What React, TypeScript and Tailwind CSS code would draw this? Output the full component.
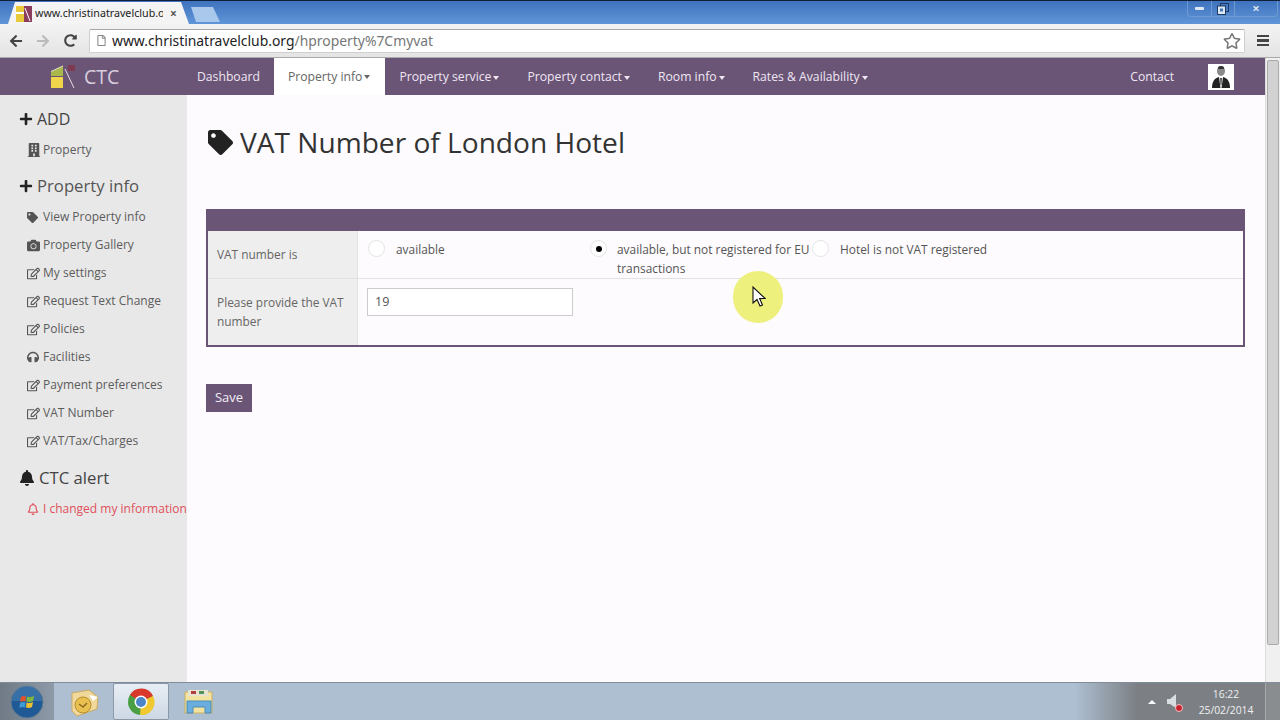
import React from "react";
import { FaPlus, FaBuilding, FaTag, FaCamera, FaRegEdit, FaHeadphones, FaBell, FaRegBell, FaArrowLeft, FaArrowRight, FaRedoAlt, FaRegFile, FaRegStar } from "react-icons/fa";

const navItems = ["Property service", "Property contact", "Room info", "Rates & Availability"];

function Caret() {
  return <span className="ml-[2px] inline-block align-middle border-x-[3.5px] border-t-[4px] border-x-transparent border-t-current" />;
}

function Logo() {
  return (
    <svg width="25" height="24" viewBox="0 0 25 24" className="shrink-0">
      <path d="M0 7 L12 1 V11 H0 Z" fill="#a9b84a" />
      <rect x="0" y="12" width="12" height="11" fill="#f0d44a" />
      <path d="M0 6.5 L12 1" stroke="#ece6c8" strokeWidth="1" />
      <rect x="17" y="0" width="7" height="6" fill="#7d3a50" />
      <path d="M14 4 L23 23" stroke="#e4dce6" strokeWidth="1" />
    </svg>
  );
}

function Avatar() {
  return (
    <div className="w-[26px] h-[26px] bg-white flex items-center justify-center">
      <svg width="24" height="25" viewBox="0 0 24 25">
        <ellipse cx="12" cy="7" rx="4" ry="5" fill="#8a8a8a" />
        <path d="M9 3.5 C10 1.5 14 1.5 15 3.5 L15 5 L9 5 Z" fill="#333" />
        <path d="M3 24 C3 17 6 14 10 13 L11.5 24 Z" fill="#222" />
        <path d="M21 24 C21 17 18 14 14 13 L12.5 24 Z" fill="#222" />
        <path d="M11 14 L13 14 L12.6 21 L11.4 21 Z" fill="#555" />
      </svg>
    </div>
  );
}

type Item = { icon: React.ReactNode; label: string };
const edit = <FaRegEdit className="text-[13px]" />;
const infoItems: Item[] = [
  { icon: <FaTag className="text-[11px]" />, label: "View Property info" },
  { icon: <FaCamera className="text-[13px]" />, label: "Property Gallery" },
  { icon: edit, label: "My settings" },
  { icon: edit, label: "Request Text Change" },
  { icon: edit, label: "Policies" },
  { icon: <FaHeadphones className="text-[12px]" />, label: "Facilities" },
  { icon: edit, label: "Payment preferences" },
  { icon: edit, label: "VAT Number" },
  { icon: edit, label: "VAT/Tax/Charges" },
];

function SideLink({ icon, label }: Item) {
  return (
    <div className="h-[28px] pl-[27px] flex items-center text-[12px] text-[#5c5c5c] whitespace-nowrap">
      <span className="w-[16px] shrink-0 flex justify-start text-[#555]">{icon}</span>
      <span>{label}</span>
    </div>
  );
}

function Radio({ checked }: { checked?: boolean }) {
  return (
    <span className="shrink-0 w-[17px] h-[17px] rounded-full border border-[#e4e4e4] bg-white flex items-center justify-center">
      {checked && <span className="w-[6px] h-[6px] rounded-full bg-black" />}
    </span>
  );
}

function Option({ label, checked, gap }: { label: string; checked?: boolean; gap: string }) {
  return (
    <div className={`w-[222px] shrink-0 flex items-start pl-[1px] ${gap}`}>
      <Radio checked={checked} />
      <span className="text-[11.9px] leading-[19px] text-[#555]">{label}</span>
    </div>
  );
}

export default function App() {
  return (
    <div className="relative w-[1280px] h-[720px] overflow-hidden flex flex-col bg-[#fdfbfd] font-['Open_Sans',sans-serif]">
      {/* Tab strip */}
      <div className="h-[24px] shrink-0 bg-gradient-to-b from-[#3f72bd] to-[#6096d8] border-t border-[#10203a] flex items-end pl-[3px]">
        <div className="w-[190px] h-[22px] pt-[1px] bg-[#f4f4f4] [clip-path:polygon(0_100%,5px_100%,12px_0,178px_0,186px_100%,190px_100%)] flex items-center pl-[13px] pr-[12px] text-[10.7px] text-[#222] font-['Noto_Sans',sans-serif]">
          <svg width="16" height="16" viewBox="0 0 16 16" className="shrink-0 mr-[3px]">
            <rect width="8" height="16" fill="#e8c93a" />
            <rect x="8" width="8" height="16" fill="#8a3d5c" />
            <rect y="6" width="8" height="2" fill="#fff" />
            <path d="M9 2 L14 15" stroke="#fff" />
          </svg>
          <span className="w-[128px] shrink-0 whitespace-nowrap overflow-hidden">www.christinatravelclub.o</span>
          <span className="ml-[7px] text-[12px] font-bold text-[#555]">×</span>
        </div>
        <div className="-ml-[2px] mb-[2px] w-[29px] h-[15px] bg-[#a9c8ec] [clip-path:polygon(0_0,22px_0,29px_100%,5px_100%)]" />
        <div className="ml-auto self-start flex h-[16px] w-[91px] mr-[2px] border border-t-0 border-[#6f9ad0] rounded-b-[4px] text-white">
          <span className="w-[24px] flex items-center justify-center border-r border-[#6f9ad0]"><span className="w-[9px] h-[3px] bg-[#dde8f5] rounded-[1px]" /></span>
          <span className="w-[23px] flex items-center justify-center border-r border-[#6f9ad0]">
            <svg width="12" height="12" viewBox="0 0 12 12"><rect x="3.5" y="0.5" width="8" height="8" fill="none" stroke="#1f3a60" /><rect x="0.5" y="3" width="8" height="8.5" fill="#dce8f6" stroke="#1f3a60" /><rect x="3" y="5.5" width="3" height="3" fill="#4a78b5" /></svg>
          </span>
          <span className="flex-1 flex items-center justify-center text-[13px] font-bold leading-none text-[#d8e2ee]">×</span>
        </div>
      </div>
      {/* Toolbar */}
      <div className="h-[34px] shrink-0 bg-gradient-to-b from-[#f3f3f3] to-[#e4e4e4] border-b border-[#a9a9a9] flex items-center pl-[9px] pr-[11px]">
        <FaArrowLeft className="text-[14px] text-[#444]" />
        <FaArrowRight className="text-[14px] text-[#bbb] ml-[13px]" />
        <FaRedoAlt className="text-[13px] text-[#444] ml-[14px]" />
        <div className="ml-[12px] w-[1156px] h-[24px] bg-white border border-[#cfcfcf] border-t-[#a8a8a8] rounded-[2px] flex items-center pl-[6px] pr-[3px] text-[13.9px] font-['Noto_Sans',sans-serif]">
          <FaRegFile className="text-[11px] text-[#888] mr-[5px]" />
          <span className="text-[#222] pt-[1px]">www.christinatravelclub.org</span>
          <span className="text-[#777] pt-[1px]">/hproperty%7Cmyvat</span>
          <FaRegStar className="ml-auto text-[18px] text-[#777]" />
        </div>
        <div className="ml-auto flex flex-col gap-[2px]">
          <span className="w-[12px] h-[2.5px] bg-[#444]" />
          <span className="w-[12px] h-[2.5px] bg-[#444]" />
          <span className="w-[12px] h-[2.5px] bg-[#444]" />
        </div>
      </div>
      {/* Page */}
      <div className="flex-1 flex min-h-0">
        <div className="flex-1 flex flex-col min-w-0">
          <nav className="h-[37px] shrink-0 bg-[#6a5577] flex items-center text-[12.2px] text-[#efe6f2]">
            <div className="w-[183px] shrink-0 flex items-center pl-[51px]">
              <Logo />
              <span className="ml-[8px] text-[19.5px] leading-none text-[#d8cede]">CTC</span>
            </div>
            <div className="px-[14px] pt-[1px] whitespace-nowrap">Dashboard</div>
            <div className="h-full bg-white text-[#666] pl-[14px] pr-[15px] pt-[1px] flex items-center whitespace-nowrap">Property info<Caret /></div>
            {navItems.map((n) => (
              <div key={n} className="px-[14px] pt-[1px] whitespace-nowrap">{n}<Caret /></div>
            ))}
            <div className="ml-auto mr-[34px] pt-[1px]">Contact</div>
            <div className="mr-[31px]"><Avatar /></div>
          </nav>
          <div className="flex-1 flex min-h-0">
            <aside className="w-[187px] shrink-0 bg-[#e8e8e8] pt-[12px]">
              <div className="pl-[19px] h-[24px] flex items-center text-[16px] text-[#444]">
                <FaPlus className="text-[14px] text-[#222] mr-[4px]" />ADD
              </div>
              <div className="mt-[5px]"><SideLink icon={<FaBuilding className="text-[14px]" />} label="Property" /></div>
              <div className="mt-[9px] pl-[19px] h-[26px] flex items-center text-[16.7px] text-[#555]">
                <FaPlus className="text-[14px] text-[#222] mr-[4px]" />Property info
              </div>
              <div className="mt-[4px]">
                {infoItems.map((i) => <SideLink key={i.label} {...i} />)}
              </div>
              <div className="mt-[10px] pl-[19px] h-[26px] flex items-center text-[16.7px] text-[#444]">
                <FaBell className="text-[16px] text-[#222] mr-[4px]" />CTC alert
              </div>
              <div className="mt-[4px] pl-[27px] h-[28px] flex items-center text-[12px] text-[#e0505a] whitespace-nowrap">
                <span className="w-[16px] shrink-0"><FaRegBell className="text-[12px]" /></span>I changed my information
              </div>
            </aside>
            <main className="flex-1 min-w-0 pl-[19px] pr-[20px] pt-[27px]">
              <h1 className="h-[40px] pl-[2px] flex items-center text-[28.1px] text-[#333] whitespace-nowrap">
                <FaTag className="text-[25px] text-[#222] mr-[7px]" />VAT Number of London Hotel
              </h1>
              <div className="mt-[47px] border-2 border-t-0 border-[#6a5577] text-[11.9px] text-[#666]">
                <div className="h-[22px] -mx-[2px] bg-[#6a5577]" />
                <div className="flex h-[48px] border-b border-[#e2e2e2]">
                  <div className="w-[150px] shrink-0 bg-[#eeeeee] border-r border-[#e2e2e2] pl-[9px] flex items-center">VAT number is</div>
                  <div className="flex-1 flex pl-[9px] pt-[9px]">
                    <Option label="available" gap="gap-[11px]" />
                    <Option label="available, but not registered for EU transactions" checked gap="gap-[10px]" />
                    <Option label="Hotel is not VAT registered" gap="gap-[11px]" />
                  </div>
                </div>
                <div className="flex h-[66px]">
                  <div className="w-[150px] shrink-0 bg-[#eeeeee] border-r border-[#e2e2e2] px-[9px] flex items-center leading-[19px]">Please provide the VAT number</div>
                  <div className="flex-1 pl-[9px] pt-[9px]">
                    <div className="w-[206px] h-[28px] border border-[#cccccc] bg-white pl-[7px] flex items-center text-[12.5px] text-[#555]">19</div>
                  </div>
                </div>
              </div>
              <button className="mt-[37px] w-[46px] h-[28px] bg-[#6a5577] text-[#f4eef6] text-[13px] flex items-center justify-center">Save</button>
            </main>
          </div>
        </div>
        {/* Scrollbar */}
        <div className="w-[15px] shrink-0 bg-[#f0f0f0] border-l border-[#dcdcdc] pt-[2px] pb-[37px] px-[1px] flex">
          <div className="flex-1 bg-[#d2d2d2] border border-[#aaaaaa] rounded-[2px]" />
        </div>
      </div>
      {/* Taskbar */}
      <div className="h-[38px] shrink-0 bg-[#aebfd2] border-t border-[#7f8d9b] flex items-center relative">
        <div className="w-[54px] h-full bg-gradient-to-r from-[#6f7a86] to-[#8e9aa8] flex items-center justify-center">
          <svg width="34" height="34" viewBox="0 0 34 34">
            <circle cx="17" cy="17" r="16" fill="#1f5a96" stroke="#5f7a90" />
            <path d="M2 16 A15 15 0 0 1 32 16 Z" fill="#4f86b8" opacity="0.5" />
            <path d="M11 12 Q13 10.5 16 11.5 L15.5 16.5 Q13 15.5 10 17 Z" fill="#e2552b" />
            <path d="M17 11.5 Q20 13 24 11 L23 16 Q19.5 17.5 16.5 16.5 Z" fill="#7fb83c" />
            <path d="M10 18 Q13 16.5 15.5 17.5 L15 22.5 Q12.5 21.5 9.5 23 Z" fill="#3f9bd8" />
            <path d="M16.5 17.5 Q19.5 18.5 23 17 L22 22 Q19 23.5 16 22.5 Z" fill="#f0c030" />
          </svg>
        </div>
        <div className="w-[59px] flex items-center justify-center">
          <svg width="30" height="30" viewBox="0 0 30 30">
            <path d="M3 6 L20 3 L29 10 L28 22 L8 29 L3 24 Z" fill="#f0d89a" stroke="#c9a860" />
            <circle cx="14" cy="18" r="8" fill="#e9c050" stroke="#b48f30" />
            <path d="M10 17 L14 20 L18 16" fill="none" stroke="#8a6a20" strokeWidth="1.5" />
            <path d="M20 8 L29 10 L24 14 Z" fill="#fff" />
          </svg>
        </div>
        <div className="w-[56px] h-[37px] bg-gradient-to-b from-[#e8eef5] to-[#cdd8e4] border border-[#8c98a5] rounded-[2px] flex items-center justify-center">
          <svg width="28" height="28" viewBox="0 0 28 28">
            <circle cx="14" cy="14" r="13" fill="#4a9e44" />
            <path d="M14 14 L3 7 A13 13 0 0 1 26 8 Z" fill="#d8392c" />
            <path d="M14 14 L26 8 A13 13 0 0 1 13 27 Z" fill="#f2c830" />
            <circle cx="14" cy="14" r="6.5" fill="#fff" />
            <circle cx="14" cy="14" r="5" fill="#4d86c8" />
          </svg>
        </div>
        <div className="w-[60px] flex items-center justify-center">
          <svg width="30" height="28" viewBox="0 0 30 28">
            <path d="M1 4 H28 V25 H1 Z" fill="#f2e3a0" stroke="#c8b060" />
            <rect x="4" y="2" width="20" height="6" fill="#e8e2d0" />
            <rect x="7" y="3" width="5" height="3" fill="#b04040" />
            <rect x="15" y="3" width="5" height="3" fill="#50905a" />
            <path d="M3 13 H27 V25 H21 V19 H9 V25 H3 Z" fill="#69aede" stroke="#4f8bb8" />
          </svg>
        </div>
        <div className="ml-auto w-[62px] h-full bg-gradient-to-r from-[#aebfd2] to-[#7c8085]" />
        <div className="w-[143px] h-full bg-[#7c8085] flex items-center">
          <span className="ml-[11px] w-0 h-0 border-x-[4px] border-b-[4px] border-x-transparent border-b-white" />
          <div className="relative ml-[10px] w-[16px] h-[16px]">
            <svg width="12" height="16" viewBox="0 0 12 16"><path d="M1 5 H4 L10 0 V14 L4 10 H1 Z" fill="#d8dde2" /></svg>
            <span className="absolute -right-[1px] bottom-[-2px] w-[8px] h-[8px] rounded-full bg-[#c8202c] border border-[#f0c0c0]" />
          </div>
          <div className="ml-[14px] w-[60px] text-center text-[10.3px] leading-[16px] text-[#f0f0f0]">
            <div>16:22</div>
            <div>25/02/2014</div>
          </div>
          <div className="ml-auto w-[15px] h-full bg-[#8a8d90] border-l border-[#a5a8ab]" />
        </div>
      </div>
      {/* Recording cursor highlight */}
      <div className="absolute left-[733px] top-[271px] w-[50px] h-[52px] rounded-full bg-[#eef07e] flex items-center justify-center pointer-events-none">
        <svg width="14" height="21" viewBox="0 0 14 21" className="ml-[1px] -mt-[1px]">
          <path d="M1 1 V17 L5 13.5 L8 20 L10.5 19 L7.6 12.6 L13 12.4 Z" fill="#fff" stroke="#111" strokeWidth="1.1" />
        </svg>
      </div>
    </div>
  );
}
